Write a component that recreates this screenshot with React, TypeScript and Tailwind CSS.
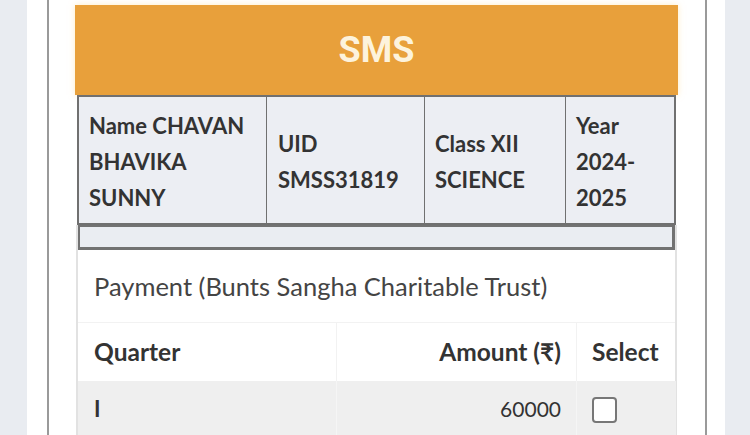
import React from "react";

export default function App() {
  const f = { fontFamily: "Lato, 'Open Sans', sans-serif" };
  return (
    <div className="w-[750px] h-[435px] overflow-hidden flex bg-[#e9ecf1]" style={f}>
      <div className="w-[27px] shrink-0 bg-[#e9ecf1]" />
      <div className="w-[698px] shrink-0 bg-white px-[20px] flex">
        <div className="w-[660px] border-x-2 border-[#9a9a9a] pl-[26px] pr-[27px] pt-[5px]">
          <div className="w-[603px] h-[90px] bg-[#e8a03b] flex items-center justify-center shadow-[0_0_6px_rgba(255,220,140,0.5)]">
            <span className="text-[36px] font-bold text-[#fdf3dc]" style={{ fontFamily: "Roboto, sans-serif" }}>SMS</span>
          </div>
          <div className="px-[2px]">
            <div className="grid grid-cols-[188px_158px_141px_112px] border-2 border-[#707070] bg-[#eceef3] text-[22px] font-bold text-[#333] leading-[36px]">
              <div className="px-[10px] pt-[11px] pb-[7px] border-r border-[#707070] flex items-center">Name CHAVAN BHAVIKA SUNNY</div>
              <div className="px-[11px] pt-[11px] pb-[7px] border-r border-[#707070] flex items-center">UID<br />SMSS31819</div>
              <div className="px-[10px] pt-[11px] pb-[7px] border-r border-[#707070] flex items-center">Class XII SCIENCE</div>
              <div className="px-[10px] pt-[11px] pb-[7px] flex items-center">Year 2024-2025</div>
            </div>
          </div>
          <div className="mx-[1px] border-x-2 border-[#e2e2e2] bg-white">
            <div className="h-[25px] border-t-2 border-l-2 border-b-[3px] border-r-[3px] border-[#727272] bg-[#eaedf2]" />
            <div className="h-[72px] pl-[16px] pt-[20px] text-[25.5px] text-[#444] leading-[32px]">Payment (Bunts Sangha Charitable Trust)</div>
            <div className="grid grid-cols-[259px_240px_99px] border-t border-[#f2f2f2] text-[24.5px] text-[#333]">
              <div className="h-[58px] pl-[16px] flex items-center font-bold border-r border-[#f2f2f2]">Quarter</div>
              <div className="h-[58px] pr-[15px] flex items-center justify-end font-bold border-r border-[#f2f2f2]">Amount (₹)</div>
              <div className="h-[58px] pl-[15px] flex items-center font-bold">Select</div>
              <div className="h-[80px] bg-[#efefef] pl-[16px] pt-[12px] border-r border-[#f5f5f5] text-[22px]">
                <div className="font-bold leading-[32px]">I</div>
                <div className="text-[18px] text-[#c4c4c4] leading-[24px] mt-[7px]">(Apr 2024 - Jun 2024)</div>
              </div>
              <div className="h-[80px] bg-[#efefef] pr-[15px] pt-[12px] text-right text-[21px] leading-[32px] border-r border-[#f5f5f5]">60000</div>
              <div className="h-[80px] bg-[#efefef] pl-[15px] pt-[16px]">
                <div className="w-[25px] h-[26px] rounded-[4px] border-2 border-[#777] bg-white" />
              </div>
            </div>
          </div>
        </div>
      </div>
      <div className="flex-1 bg-[#e9ecf1]" />
    </div>
  );
}
